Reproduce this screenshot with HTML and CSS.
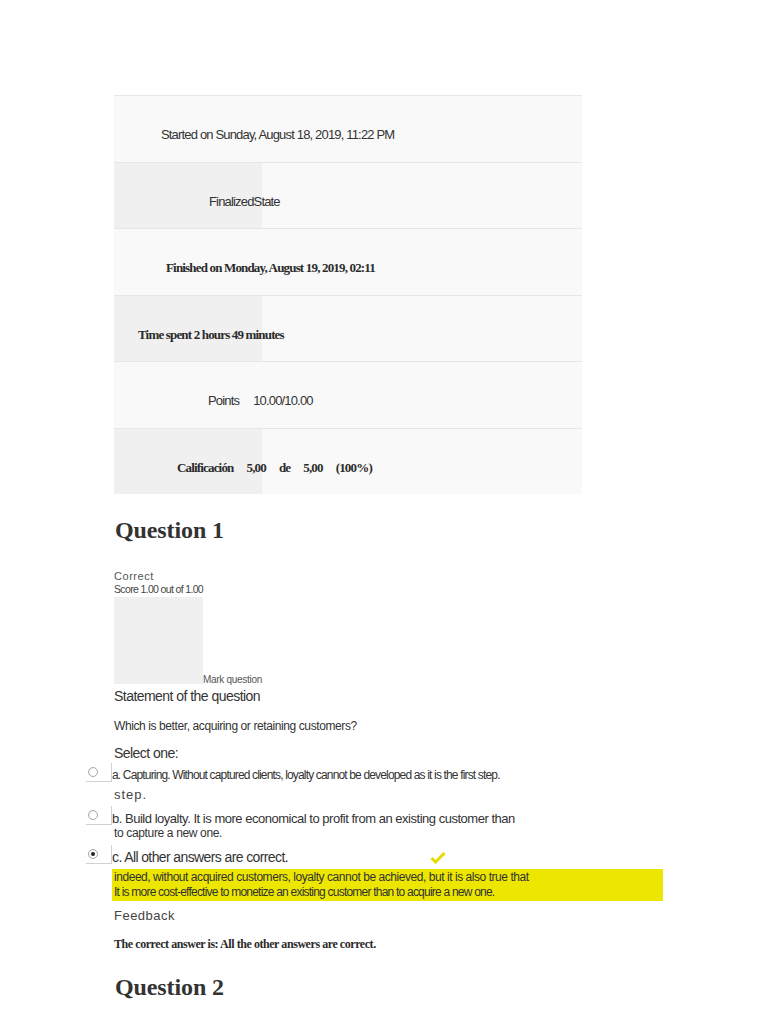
FILE: index.html
```html
<!DOCTYPE html>
<html lang="en">
<head>
<meta charset="utf-8">
<title>Quiz review</title>
<link rel="stylesheet" href="styles.css">
</head>
<body>
<div class="page">
  <div class="summary">
    <div class="row"><span class="sans k1">Started on Sunday, August 18, 2019, 11:22 PM</span></div>
    <div class="row row-shaded"><span class="sans k2">FinalizedState</span></div>
    <div class="row"><span class="serif k3">Finished on Monday, August 19, 2019, 02:11</span></div>
    <div class="row row-shaded"><span class="serif k4">Time spent 2 hours 49 minutes</span></div>
    <div class="row"><span class="sans k5">Points</span><span class="sans v5">10.00/10.00</span></div>
    <div class="row row-shaded"><span class="serif k6">Calificación</span><span class="serif v6">5,00</span><span class="serif v6">de</span><span class="serif v6">5,00</span><span class="serif v6">(100%)</span></div>
  </div>

  <h2 class="qtitle">Question 1</h2>
  <div class="info">
    <div class="state">Correct</div>
    <div class="grade">Score 1.00 out of 1.00</div>
    <div class="flag"><div class="flagbox"></div><span class="flagtext">Mark question</span></div>
  </div>

  <div class="content">
    <div class="stmt">Statement of the question</div>
    <div class="qtext">Which is better, acquiring or retaining customers?</div>
    <div class="prompt">Select one:</div>
    <div class="answers">
      <div class="opt opt-a">
        <span class="radio-cell"><span class="radio"></span></span>
        <span class="label la">a. Capturing. Without captured clients, loyalty cannot be developed as it is the first step.</span>
      </div>
      <div class="cont ca">step.</div>
      <div class="opt opt-b">
        <span class="radio-cell"><span class="radio"></span></span>
        <span class="label lb">b. Build loyalty. It is more economical to profit from an existing customer than</span>
      </div>
      <div class="cont cb">to capture a new one.</div>
      <div class="opt opt-c">
        <span class="radio-cell"><span class="radio radio-on"></span></span>
        <span class="label lc">c. All other answers are correct.</span>
        <svg class="tick" width="16" height="13" viewBox="0 0 16 13"><path d="M1.5 7 L5.5 11 L14.5 2" fill="none" stroke="#e6dc00" stroke-width="3"/></svg>
      </div>
    </div>
    <div class="specific">
      <div class="hl hl1">indeed, without acquired customers, loyalty cannot be achieved, but it is also true that</div>
      <div class="hl hl2">It is more cost-effective to monetize an existing customer than to acquire a new one.</div>
    </div>
    <div class="fbtitle">Feedback</div>
    <div class="rightanswer">The correct answer is: All the other answers are correct.</div>
  </div>

  <h2 class="qtitle">Question 2</h2>
</div>
</body>
</html>
```

FILE: styles.css
```css
body { margin: 0; background: #fff; color: #333; font-family: "Liberation Sans", Arial, sans-serif; }
.page { margin-left: 114px; width: 468px; padding-top: 95px; }

.row { height: 66.5px; box-sizing: border-box; border-top: 1px solid #e6e6e6; background: #f9f9f9; padding-top: 29px; white-space: nowrap; line-height: 17px; }
.row-shaded { background: linear-gradient(to right, #f0f0f0 148px, #f9f9f9 148px); }
.sans { font-family: "Liberation Sans", Arial, sans-serif; font-size: 13px; letter-spacing: -0.83px; color: #333; }
.serif { font-family: "Liberation Serif", "Times New Roman", serif; font-weight: bold; font-size: 13px; letter-spacing: -0.83px; color: #2b2b2b; }
.k1 { margin-left: 47px; }
.k2 { margin-left: 95px; }
.k3 { margin-left: 52px; }
.k4 { margin-left: 24px; }
.k5 { margin-left: 94px; }
.v5 { margin-left: 14px; }
.k6 { margin-left: 63px; }
.v6 { margin-left: 13px; }

.qtitle { font-family: "Liberation Serif", "Times New Roman", serif; font-weight: bold; font-size: 24px; line-height: 30px; letter-spacing: -0.1px; color: #333; margin: 21px 0 0 1px; }
.info { margin-top: 25px; }
.state { font-size: 11px; line-height: 13px; letter-spacing: 0.55px; color: #555; }
.grade { font-size: 10.5px; line-height: 13px; letter-spacing: -0.65px; color: #444; }
.flag { display: flex; align-items: flex-end; margin-top: 1px; }
.flagbox { width: 89px; height: 87px; background: #f0f0f0; }
.flagtext { font-size: 10px; line-height: 8px; letter-spacing: -0.29px; color: #555; }

.stmt { font-size: 14px; line-height: 16px; letter-spacing: -0.54px; margin-top: 4px; }
.qtext { font-size: 12px; line-height: 14px; letter-spacing: -0.4px; margin-top: 15px; }
.prompt { font-size: 14px; line-height: 16px; letter-spacing: -0.55px; margin-top: 12px; }
.answers { margin-top: 2px; }
.opt { display: flex; align-items: flex-start; margin-left: -28px; }
.radio-cell { flex: none; width: 26px; height: 19px; border-right: 1px solid #d2d2d2; border-bottom: 1px solid #d2d2d2; display: flex; align-items: center; padding-left: 2px; box-sizing: border-box; }
.radio { width: 10px; height: 10px; box-sizing: border-box; border-radius: 50%; border: 1px solid #a8a8a8; background: radial-gradient(circle at 60% 60%, #fff 40%, #e8e8e8 100%); position: relative; }
.radio-on::after { content: ""; position: absolute; left: 2px; top: 2px; width: 4px; height: 4px; border-radius: 50%; background: #222; }
.label { white-space: nowrap; padding-top: 5px; line-height: 15px; }
.la { font-size: 12px; letter-spacing: -0.84px; }
.lb { font-size: 13px; letter-spacing: -0.48px; }
.lc { font-size: 14px; letter-spacing: -0.61px; }
.cont { white-space: nowrap; line-height: 15px; }
.ca { font-size: 13px; letter-spacing: 0.96px; color: #444; margin-top: 4px; }
.opt-b { margin-top: 4px; }
.cb { font-size: 12px; letter-spacing: -0.35px; }
.opt-c { margin-top: 4px; }
.tick { flex: none; margin-left: 142px; margin-top: 6px; }
.specific { margin-left: -2px; width: 551px; height: 32px; box-sizing: border-box; background: #ece600; padding: 1px 0 0 2px; margin-top: 4px; }
.hl { font-size: 12px; line-height: 15px; white-space: nowrap; color: #333; }
.hl1 { letter-spacing: -0.45px; }
.hl2 { letter-spacing: -0.78px; }
.fbtitle { font-size: 13px; line-height: 15px; letter-spacing: 0.49px; color: #444; margin-top: 7px; }
.rightanswer { font-family: "Liberation Serif", "Times New Roman", serif; font-weight: bold; font-size: 12px; line-height: 14px; letter-spacing: -0.44px; margin-top: 14px; color: #2b2b2b; }
```
